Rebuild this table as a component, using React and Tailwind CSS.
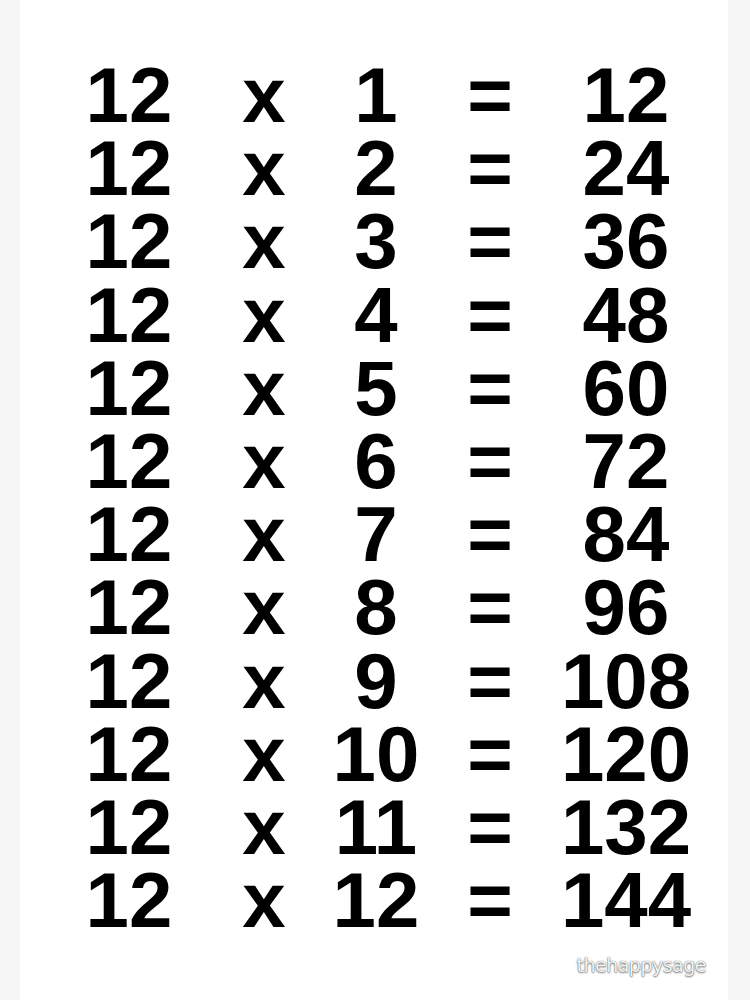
const rows = Array.from({ length: 12 }, (_, i) => i + 1);

function Row({ n }) {
  return (
    <div className="flex h-[73.2px] items-start leading-[73.2px]">
      <span className="w-[134px] text-center">12</span>
      <span className="w-[136px] text-center">x</span>
      <span className="w-[88px] text-center">{n}</span>
      <span className="w-[140px] text-center">=</span>
      <span className="w-[132px] text-center">{12 * n}</span>
    </div>
  );
}

export default function App() {
  return (
    <div className="flex h-[1000px] w-[750px] bg-[#f7f7f7]">
      <div className="ml-[20px] flex h-full w-[708px] flex-col bg-white">
        <div className="pl-[42px] pt-[59px] font-['Liberation_Sans',Arial,sans-serif] text-[78px] font-bold text-black">
          {rows.map((n) => (
            <Row key={n} n={n} />
          ))}
        </div>
        <div className="mt-auto mb-[21px] pr-[22px] text-right font-['DejaVu_Sans',sans-serif] text-[19px] tracking-[-0.5px] text-[#f4f4f4] [text-shadow:0_0_1px_#555,0_1px_2px_#777]">
          thehappysage
        </div>
      </div>
    </div>
  );
}
